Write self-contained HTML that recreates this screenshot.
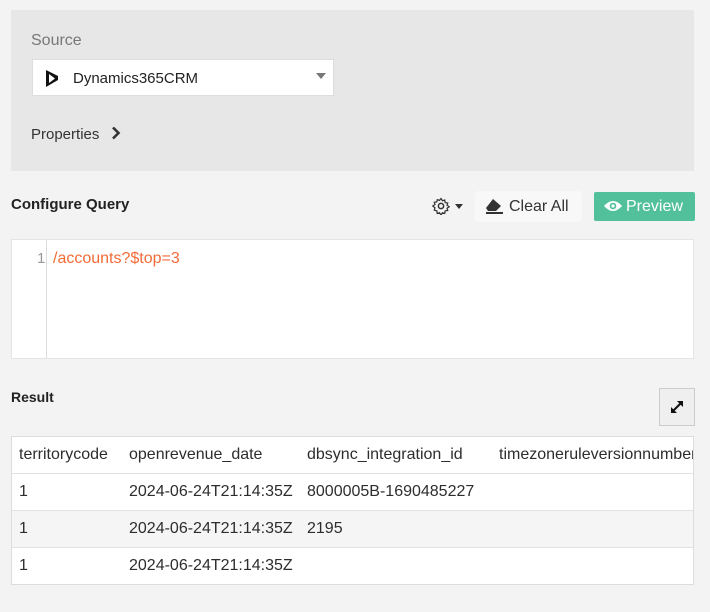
<!DOCTYPE html>
<html><head><meta charset="utf-8"><style>
*{box-sizing:border-box;margin:0;padding:0}
body{width:710px;height:612px;background:#f3f3f3;font-family:"Liberation Sans",sans-serif;color:#2d2d2d;position:relative;overflow:hidden}
.abs{position:absolute}
.panel{left:11px;top:10px;width:683px;height:161px;background:#e7e7e7}
.sel{left:32px;top:59px;width:302px;height:37px;background:#fff;border:1px solid #ddd}
.tbl{left:11px;top:436px;width:683px;height:149px;background:#fff;border:1px solid #ddd;overflow:hidden}
.row{position:absolute;left:0;width:100%;height:37px;border-bottom:1px solid #e2e2e2;font-size:16px}
.row span{position:absolute;top:9px;white-space:nowrap}
</style></head><body>
<div class="abs panel"></div>
<div class="abs" style="left:31px;top:32px;font-size:16px;color:#777">Source</div>
<div class="abs sel">
 <svg class="abs" style="left:12px;top:10px" width="14" height="17" viewBox="0 0 14 17"><path d="M1 0 L13 6 L13 10 L1 17 Z M4 4 L4 13 L10 8.5Z" fill="#111" fill-rule="evenodd"/></svg>
 <div class="abs" style="left:40px;top:10px;font-size:15px;color:#222">Dynamics365CRM</div>
 <div class="abs" style="left:283px;top:13px;width:0;height:0;border-left:5px solid transparent;border-right:5px solid transparent;border-top:6px solid #777"></div>
</div>
<div class="abs" style="left:31px;top:126px;font-size:15px;color:#333">Properties</div>
<svg class="abs" style="left:111px;top:126px" width="10" height="14" viewBox="0 0 10 14"><path d="M2 1.5 L7.5 7 L2 12.5" stroke="#333" stroke-width="2.6" fill="none"/></svg>
<div class="abs" style="left:11px;top:196px;font-size:15px;font-weight:bold;color:#222">Configure Query</div>
<svg class="abs" style="left:432px;top:197px" width="18" height="18" viewBox="0 0 24 24"><circle cx="12" cy="12" r="3.5" fill="none" stroke="#333" stroke-width="2"/><path d="M12 2l2 3 3-1 .5 3.5 3.5.5-1 3 3 2-3 2 1 3-3.5.5-.5 3.5-3-1-2 3-2-3-3 1-.5-3.5L3 17.5l1-3-3-2.5 3-2-1-3 3.5-.5L7 3.5l3 1z" fill="none" stroke="#333" stroke-width="1.6"/></svg>
<div class="abs" style="left:455px;top:204px;border-left:4px solid transparent;border-right:4px solid transparent;border-top:5px solid #333"></div>
<div class="abs" style="left:475px;top:191px;width:107px;height:31px;background:#f8f8f8;border-radius:4px"></div>
<svg class="abs" style="left:486px;top:198px" width="17" height="16" viewBox="0 0 17 16"><path d="M7 1 L15 8 L10 13 L2 13 L0 10 Z" fill="#333"/><rect x="0" y="14" width="17" height="2" fill="#333"/></svg>
<div class="abs" style="left:509px;top:198px;font-size:16px;color:#333">Clear All</div>
<div class="abs" style="left:594px;top:192px;width:101px;height:29px;background:#52c19b;border-radius:2px"></div>
<svg class="abs" style="left:603px;top:199px" width="20" height="14" viewBox="0 0 20 14"><path d="M1 7 Q10 -3 19 7 Q10 17 1 7Z" fill="#fff"/><circle cx="10" cy="7" r="3.3" fill="#52c19b"/><circle cx="10" cy="7" r="1.6" fill="#fff"/></svg>
<div class="abs" style="left:626px;top:198px;font-size:16px;color:#fff">Preview</div>
<div class="abs" style="left:11px;top:239px;width:683px;height:120px;background:#fff;border:1px solid #e4e4e4"></div>
<div class="abs" style="left:46px;top:240px;width:1px;height:118px;background:#ddd"></div>
<div class="abs" style="left:37px;top:250px;font-size:15px;color:#999">1</div>
<div class="abs" style="left:53px;top:250px;font-size:16px;color:#f26b38">/accounts?$top=3</div>
<div class="abs" style="left:11px;top:389px;font-size:14px;font-weight:bold;color:#222">Result</div>
<div class="abs" style="left:659px;top:388px;width:36px;height:38px;background:#efefef;border:1px solid #ccc"></div>
<svg class="abs" style="left:668px;top:398px" width="18" height="18" viewBox="0 0 18 18"><path d="M4 14 L14 4" stroke="#111" stroke-width="2"/><path d="M9 3h6v6z M3 9v6h6z" fill="#111"/></svg>
<div class="abs tbl">
 <div class="row" style="top:0;font-weight:normal"><span style="left:7px">territorycode</span><span style="left:117px">openrevenue_date</span><span style="left:295px">dbsync_integration_id</span><span style="left:487px">timezoneruleversionnumber</span></div>
 <div class="row" style="top:37px"><span style="left:7px">1</span><span style="left:117px">2024-06-24T21:14:35Z</span><span style="left:295px">8000005B-1690485227</span></div>
 <div class="row" style="top:74px;background:#f5f5f5"><span style="left:7px">1</span><span style="left:117px">2024-06-24T21:14:35Z</span><span style="left:295px">2195</span></div>
 <div class="row" style="top:111px;border-bottom:none"><span style="left:7px">1</span><span style="left:117px">2024-06-24T21:14:35Z</span></div>
</div>
</body></html>
